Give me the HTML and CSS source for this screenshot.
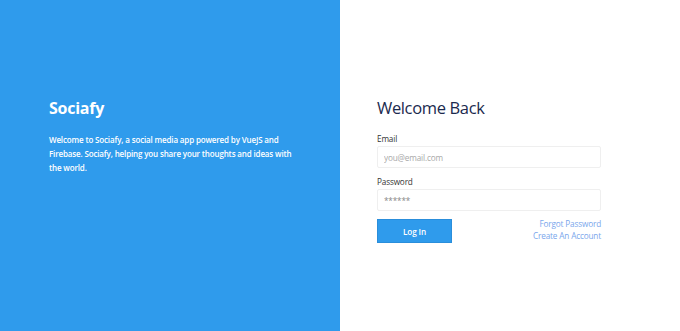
FILE: index.html
```html
<!DOCTYPE html>
<html>
<head>
<meta charset="utf-8">
<link rel="stylesheet" href="styles.css">
</head>
<body>
<div class="page">
  <section class="hero">
    <h1 class="brand">Sociafy</h1>
    <p class="intro">Welcome to Sociafy, a social media app powered by VueJS and Firebase. Sociafy, helping you share your thoughts and ideas with the world.</p>
  </section>
  <section class="panel">
    <form class="login">
      <h2 class="title">Welcome Back</h2>
      <label class="label" for="email">Email</label>
      <input class="field" id="email" type="text" placeholder="you@email.com">
      <label class="label" for="pw">Password</label>
      <input class="field pw" id="pw" type="text" placeholder="******">
      <div class="actions">
        <button class="btn" type="button">Log In</button>
        <div class="links">
          <a class="link">Forgot Password</a>
          <a class="link">Create An Account</a>
        </div>
      </div>
    </form>
  </section>
</div>
</body>
</html>
```

FILE: styles.css
```css
* { box-sizing: border-box; }
html, body { margin: 0; padding: 0; }
body {
  font-family: "Open Sans", "Noto Sans", sans-serif;
  width: 680px;
  height: 331px;
  overflow: hidden;
}
.page {
  display: flex;
  height: 331px;
}
.hero {
  width: 340px;
  flex: none;
  background: #2f9bec;
  color: #fff;
  padding: 98px 20px 0 49px;
}
.brand {
  margin: 0;
  font-size: 16px;
  font-weight: 700;
  line-height: 20px;
  letter-spacing: -0.25px;
}
.intro {
  margin: 15px 0 0;
  font-size: 8px;
  line-height: 14px;
  font-weight: 600;
  letter-spacing: -0.15px;
  width: 248px;
}
.panel {
  width: 340px;
  flex: none;
  background: #fff;
  padding: 98px 0 0 37px;
}
.login {
  width: 224px;
  display: flex;
  flex-direction: column;
}
.title {
  margin: 0 0 15px;
  font-size: 16.5px;
  font-weight: 400;
  line-height: 20px;
  letter-spacing: -0.35px;
  color: #1b2a4e;
}
.label {
  font-size: 8.2px;
  line-height: 11px;
  letter-spacing: -0.15px;
  color: #333;
  margin-bottom: 2px;
}
.field {
  height: 22px;
  border: 1px solid #efefef;
  border-radius: 2px;
  padding: 0 6px;
  font-family: inherit;
  font-size: 8.2px;
  letter-spacing: -0.15px;
  margin: 0 0 8px;
  outline: none;
  color: #333;
}
.field::placeholder { color: #a8a8a8; }
.pw::placeholder { color: #888; }
.actions {
  display: flex;
  justify-content: space-between;
  align-items: flex-start;
}
.btn {
  width: 75px;
  height: 24px;
  background: #2f9bec;
  border: 1px solid #2a8edb;
  color: #fff;
  font-family: inherit;
  font-size: 8.2px;
  font-weight: 600;
  letter-spacing: -0.15px;
  padding: 0;
}
.links {
  display: flex;
  flex-direction: column;
  align-items: flex-end;
  margin-top: -1px;
}
.link {
  color: #79a6ec;
  font-size: 8.2px;
  line-height: 12px;
  letter-spacing: -0.15px;
}
```
